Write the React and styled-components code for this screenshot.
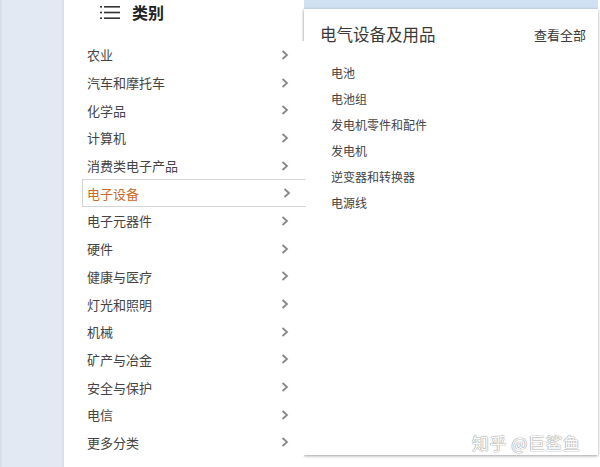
import React from 'react'
import styled, { createGlobalStyle } from 'styled-components';

const GlobalStyle = createGlobalStyle`
  html, body {
    margin: 0;
    padding: 0;
    background: #fff;
  }
  body {
    font-family: "Microsoft YaHei", "Noto Sans CJK SC", "Noto Sans", sans-serif;
    color: #333;
  }
`;

const Page = styled.div`
  display: flex;
  width: 600px;
  height: 467px;
  overflow: hidden;
  position: relative;
`;

const LeftStrip = styled.div`
  width: 60px;
  background: #e3e9f2;
  border-left: 2px solid #d9dfe9;
  border-right: 2px solid #dbe1ea;
`;

const Sidebar = styled.div`
  width: 240px;
  padding-left: 18px;
  box-sizing: border-box;
  display: flex;
  flex-direction: column;
  position: relative;
  z-index: 2;
`;

const Header = styled.div`
  display: flex;
  align-items: center;
  gap: 12px;
  height: 24px;
  padding-left: 18px;
  font-size: 16px;
  font-weight: 700;
  color: #222;
`;

const List = styled.ul`
  list-style: none;
  margin: 17px 0 0;
  padding: 0;
`;

const Row = styled.li`
  display: flex;
  align-items: center;
  justify-content: space-between;
  height: 27.7px;
  box-sizing: border-box;
  padding: 0 15px 0 4px;
  font-size: 13px;
  color: ${p => (p.$active ? '#c96a2a' : '#444')};
  background: #fff;
  border: 1px solid ${p => (p.$active ? '#d6d6d6' : 'transparent')};
  border-right: none;
  margin-right: ${p => (p.$active ? '-2px' : '0')};
`;

const Flyout = styled.div`
  width: 294px;
  display: flex;
  flex-direction: column;
`;

const TopBar = styled.div`
  height: 9px;
  background: #cfe1f2;
`;

const Panel = styled.div`
  height: 446px;
  background: #fff;
  box-shadow: 0 1px 3px rgba(0, 0, 0, 0.35), -1px 0 2px rgba(0, 0, 0, 0.08);
  padding: 13px 12px 0 16px;
  box-sizing: border-box;
`;

const PanelHead = styled.div`
  display: flex;
  justify-content: space-between;
  align-items: center;
  height: 24px;
`;

const Title = styled.div`
  font-size: 16.5px;
  color: #3a3a3a;
`;

const ViewAll = styled.a`
  font-size: 13px;
  color: #3a3a3a;
  text-decoration: none;
`;

const SubList = styled.ul`
  list-style: none;
  margin: 27px 0 0;
  padding: 0 0 0 11px;
`;

const SubItem = styled.li`
  height: 26px;
  line-height: 26px;
  margin-top: ${p => (p.$first ? '-13px' : '0')};
  font-size: 12px;
  color: #444;
`;

const Watermark = styled.div`
  position: absolute;
  left: 472px;
  top: 430px;
  font-size: 17px;
  color: #fff;
  letter-spacing: 0.5px;
  text-shadow: 0 0 1px #999, 0 0 1px #999, 0 0 1px #aaa;
`;

const ListIcon = () => (
  <svg width="20" height="15" viewBox="0 0 20 15">
    <g fill="#333">
      <rect x="0" y="1" width="2" height="1.6" />
      <rect x="4" y="1" width="16" height="1.6" />
      <rect x="0" y="6.7" width="2" height="1.6" />
      <rect x="4" y="6.7" width="16" height="1.6" />
      <rect x="0" y="12.4" width="2" height="1.6" />
      <rect x="4" y="12.4" width="16" height="1.6" />
    </g>
  </svg>
);

const Chevron = () => (
  <svg width="8" height="10" viewBox="0 0 8 10">
    <path d="M1.5 1 L6 5 L1.5 9" fill="none" stroke="#888" strokeWidth="1.8" />
  </svg>
);

const categories = [
  '农业', '汽车和摩托车', '化学品', '计算机', '消费类电子产品', '电子设备',
  '电子元器件', '硬件', '健康与医疗', '灯光和照明', '机械', '矿产与冶金',
  '安全与保护', '电信', '更多分类',
];

const subs = ['电池', '电池组', '发电机零件和配件', '发电机', '逆变器和转换器', '电源线'];

export default function App() {
  return (
    <>
      <GlobalStyle />
      <Page>
        <LeftStrip />
        <Sidebar>
          <Header>
            <ListIcon />
            <span>类别</span>
          </Header>
          <List>
            {categories.map(c => (
              <Row key={c} $active={c === '电子设备'}>
                <span>{c}</span>
                <Chevron />
              </Row>
            ))}
          </List>
        </Sidebar>
        <Flyout>
          <TopBar />
          <Panel>
            <PanelHead>
              <Title>电气设备及用品</Title>
              <ViewAll href="#">查看全部</ViewAll>
            </PanelHead>
            <SubList>
              {subs.map((s, i) => (
                <SubItem key={s} $first={i === 0}>{s}</SubItem>
              ))}
            </SubList>
          </Panel>
        </Flyout>
        <Watermark>知乎 @巨鲨鱼</Watermark>
      </Page>
    </>
  );
}
